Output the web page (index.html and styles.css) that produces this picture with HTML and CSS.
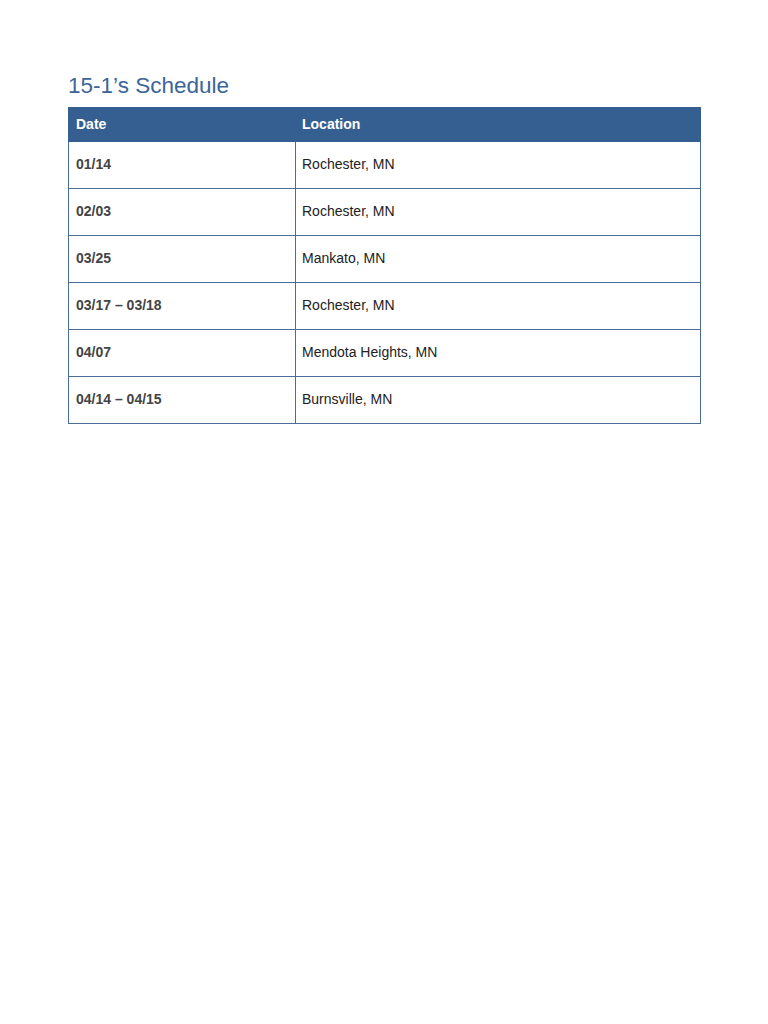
FILE: index.html
```html
<!DOCTYPE html>
<html>
<head>
<meta charset="utf-8">
<link rel="stylesheet" href="styles.css">
</head>
<body>
<main class="page">
  <h1 class="title">15-1’s Schedule</h1>
  <table class="schedule">
    <thead>
      <tr><th class="col-date">Date</th><th>Location</th></tr>
    </thead>
    <tbody>
      <tr><td class="date">01/14</td><td>Rochester, MN</td></tr>
      <tr><td class="date">02/03</td><td>Rochester, MN</td></tr>
      <tr><td class="date">03/25</td><td>Mankato, MN</td></tr>
      <tr><td class="date">03/17 – 03/18</td><td>Rochester, MN</td></tr>
      <tr><td class="date">04/07</td><td>Mendota Heights, MN</td></tr>
      <tr><td class="date">04/14 – 04/15</td><td>Burnsville, MN</td></tr>
    </tbody>
  </table>
</main>
</body>
</html>
```

FILE: styles.css
```css
html, body {
  margin: 0;
  padding: 0;
  background: #ffffff;
}
.page {
  padding: 73px 0 0 68px;
  font-family: "Liberation Sans", Arial, sans-serif;
}
.title {
  margin: 0 0 8px 0;
  font-weight: normal;
  font-size: 22.5px;
  line-height: 26px;
  color: #3a6599;
}
.schedule {
  width: 633px;
  border-collapse: collapse;
  font-size: 14px;
}
.schedule th {
  background: #365f91;
  color: #ffffff;
  text-align: left;
  font-weight: bold;
  height: 31px;
  padding: 0 6px 2px 7px;
  border: 1px solid #365f91;
  vertical-align: middle;
}
.schedule th + th {
  padding-left: 6px;
}
.schedule .col-date {
  width: 213px;
}
.schedule td {
  height: 43px;
  padding: 0 6px 3px 7px;
  border: 1px solid #4a6d99;
  color: #222222;
  vertical-align: middle;
}
.schedule td + td {
  padding-left: 6px;
}
.schedule td.date {
  font-weight: bold;
  color: #444444;
}
```
